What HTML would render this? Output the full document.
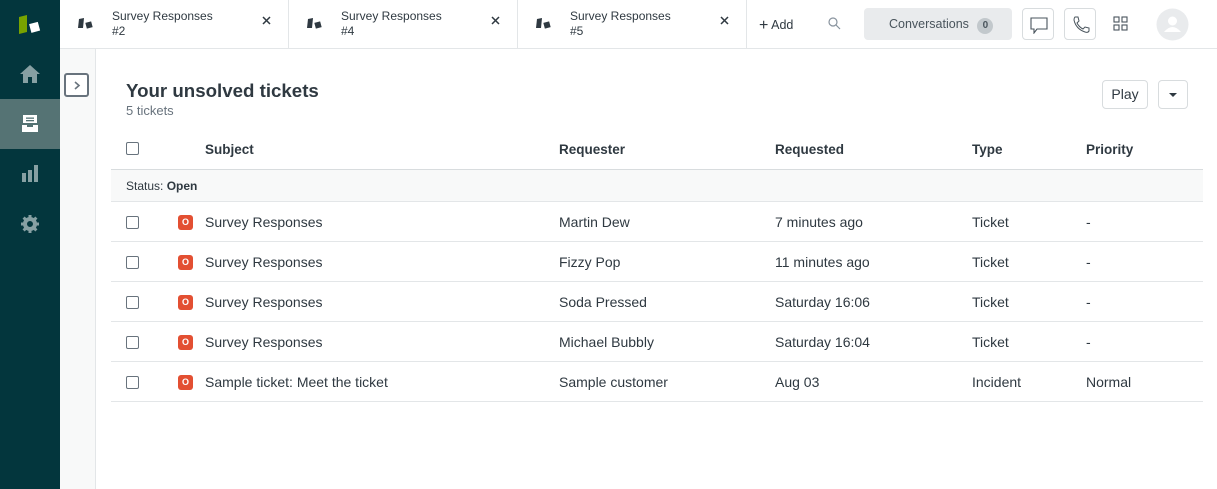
<!DOCTYPE html>
<html><head><style>
*{box-sizing:border-box;margin:0;padding:0}
body{width:1217px;height:489px;overflow:hidden;font-family:"Liberation Sans",sans-serif;color:#2f3941;background:#fff;position:relative;font-size:14px}
.abs{position:absolute}
.side{left:0;top:0;width:60px;height:489px;background:#03363d}
.top{left:60px;top:0;right:0;height:49px;border-bottom:1px solid #e3e6e8;background:#fff}
.tab{top:0;height:48px;width:229px;border-right:1px solid #e3e6e8}
.tab .t{position:absolute;left:52px;top:9px;font-size:12px;line-height:15px;color:#2f3941}
.tab .x{position:absolute;right:17px;top:16px}
.panel{left:60px;top:49px;width:36px;height:440px;background:#f8f9f9;border-right:1px solid #e3e6e8}
.cb{position:absolute;width:13px;height:13px;border:1px solid #68737d;border-radius:2px;background:#fff}
.row{position:absolute;left:111px;width:1092px;height:40px;border-bottom:1px solid #e3e6e8}
.row span{position:absolute;top:12px;font-size:14px;color:#2f3941}
.hd span{font-size:13.5px;font-weight:bold}
.badge{position:absolute;left:67px;top:13px;width:15px;height:15px;background:#e34f32;border-radius:3px;color:#fff;font-size:9px;font-weight:bold;text-align:center;line-height:15px}
.btn{border:1px solid #d8dcde;border-radius:4px;background:#fff}
</style></head><body>
<div class="abs side">
 <svg class="abs" style="left:17px;top:12px" width="28" height="24"><polygon points="2,5 10,3 10,20 2,22" fill="#78a300"/><rect x="13" y="11" width="9" height="9" fill="#fff" transform="rotate(-15 17 15)"/></svg>
 <svg class="abs" style="left:19px;top:64px" width="22" height="20"><path d="M11 1 L1 10 H4 V19 H9 V13 H13 V19 H18 V10 H21 Z" fill="#87a0a3"/></svg>
 <div class="abs" style="left:0;top:99px;width:60px;height:50px;background:#557374"></div>
 <svg class="abs" style="left:21px;top:114px" width="18" height="19"><rect x="2" y="1" width="14" height="8" fill="#fff"/><rect x="5" y="3.5" width="8" height="1.3" fill="#557374"/><rect x="5" y="6" width="8" height="1.3" fill="#557374"/><path d="M1 11 H6 V13 H12 V11 H17 V18 H1 Z" fill="#fff"/></svg>
 <svg class="abs" style="left:22px;top:165px" width="16" height="18"><rect x="0" y="8" width="4" height="9" fill="#87a0a3"/><rect x="6" y="5" width="4" height="12" fill="#87a0a3"/><rect x="12" y="0" width="4" height="17" fill="#87a0a3"/></svg>
 <svg class="abs" style="left:20px;top:214px" width="20" height="20" viewBox="0 0 20 20"><circle cx="10" cy="10" r="5" fill="none" stroke="#87a0a3" stroke-width="4"/><g stroke="#87a0a3" stroke-width="3"><path d="M10 1v4M10 15v4M1 10h4M15 10h4M3.6 3.6l2.8 2.8M13.6 13.6l2.8 2.8M3.6 16.4l2.8-2.8M13.6 6.4l2.8-2.8"/></g></svg>
</div>
<div class="abs top">
 <div class="abs tab" style="left:0"><svg class="abs" style="left:18px;top:17px" width="16" height="12"><polygon points="1,2 6,1 5,11 0,11" fill="#2f3941"/><rect x="8" y="5" width="6" height="6" fill="#2f3941" transform="rotate(-15 11 8)"/></svg><div class="t">Survey Responses<br>#2</div><svg class="x" width="9" height="9"><path d="M1 1L8 8M8 1L1 8" stroke="#2f3941" stroke-width="1.5"/></svg></div>
 <div class="abs tab" style="left:229px"><svg class="abs" style="left:18px;top:17px" width="16" height="12"><polygon points="1,2 6,1 5,11 0,11" fill="#2f3941"/><rect x="8" y="5" width="6" height="6" fill="#2f3941" transform="rotate(-15 11 8)"/></svg><div class="t">Survey Responses<br>#4</div><svg class="x" width="9" height="9"><path d="M1 1L8 8M8 1L1 8" stroke="#2f3941" stroke-width="1.5"/></svg></div>
 <div class="abs tab" style="left:458px"><svg class="abs" style="left:18px;top:17px" width="16" height="12"><polygon points="1,2 6,1 5,11 0,11" fill="#2f3941"/><rect x="8" y="5" width="6" height="6" fill="#2f3941" transform="rotate(-15 11 8)"/></svg><div class="t">Survey Responses<br>#5</div><svg class="x" width="9" height="9"><path d="M1 1L8 8M8 1L1 8" stroke="#2f3941" stroke-width="1.5"/></svg></div>
 <div class="abs" style="left:699px;top:16px;font-size:12.5px;color:#2f3941"><span style="font-size:16px;position:relative;top:1px">+</span> Add</div>
 <svg class="abs" style="left:768px;top:17px" width="13" height="13"><circle cx="5" cy="5" r="4" fill="none" stroke="#87929d" stroke-width="1.2"/><path d="M8 8 L12 12" stroke="#87929d" stroke-width="1.2"/></svg>
 <div class="abs" style="left:804px;top:8px;width:148px;height:32px;background:#e9ebed;border-radius:4px;font-size:12.5px;color:#49545c;line-height:32px;padding-left:25px">Conversations <span style="display:inline-block;width:16px;height:16px;border-radius:8px;background:#c2c8cc;font-size:10px;line-height:16px;text-align:center;margin-left:5px;font-weight:bold">0</span></div>
 <div class="abs btn" style="left:962px;top:8px;width:32px;height:32px"><svg class="abs" style="left:7px;top:8px" width="18" height="17"><path d="M1 1 H17 V12 H7 L4 16 V12 H1 Z" fill="none" stroke="#49545c" stroke-width="1.1"/></svg></div>
 <div class="abs btn" style="left:1004px;top:8px;width:32px;height:32px"><svg class="abs" style="left:7px;top:7px" width="18" height="18"><path d="M3 1 L6 1 L7 5 L5 7 Q7 11 11 13 L13 11 L17 12 L17 15 Q16 17 13 16 Q4 13 2 4 Q2 2 3 1 Z" fill="none" stroke="#49545c" stroke-width="1"/></svg></div>
 <svg class="abs" style="left:1053px;top:16px" width="15" height="15"><g fill="none" stroke="#49545c" stroke-width="1.1"><rect x="1" y="1" width="5" height="5"/><rect x="9" y="1" width="5" height="5"/><rect x="1" y="9" width="5" height="5"/><rect x="9" y="9" width="5" height="5"/></g></svg>
 <svg class="abs" style="left:1096px;top:8px" width="33" height="33"><circle cx="16.5" cy="16.5" r="16" fill="#e9ebed"/><circle cx="16.5" cy="13" r="4.5" fill="#fff"/><path d="M8 24 Q16.5 14 25 24 Z" fill="#fff"/></svg>
</div>
<div class="abs panel"><div class="abs btn" style="left:4px;top:24px;width:25px;height:24px;border:2px solid #68737d;border-radius:3px"><svg class="abs" style="left:7px;top:5px" width="8" height="11"><path d="M2 2 L6 5.5 L2 9" fill="none" stroke="#68737d" stroke-width="1.6"/></svg></div></div>
<div class="abs" style="left:126px;top:80px;font-size:18.7px;font-weight:bold;color:#2f3941">Your unsolved tickets</div>
<div class="abs" style="left:126px;top:103px;font-size:13px;color:#68737d">5 tickets</div>
<div class="abs btn" style="left:1102px;top:80px;width:46px;height:29px;font-size:14px;text-align:center;line-height:27px">Play</div>
<div class="abs btn" style="left:1158px;top:80px;width:30px;height:29px"><div class="abs" style="left:10px;top:12px;width:0;height:0;border-left:4px solid transparent;border-right:4px solid transparent;border-top:4px solid #2f3941"></div></div>
<div class="row hd" style="top:130px;height:40px;border-bottom:1px solid #d8dcde">
 <div class="cb" style="left:15px;top:12px"></div>
 <span style="left:94px;top:12px">Subject</span><span style="left:448px">Requester</span><span style="left:664px">Requested</span><span style="left:861px">Type</span><span style="left:975px">Priority</span>
</div>
<div class="row" style="top:170px;height:32px;background:#f8f9f9"><span style="left:15px;top:9px;font-size:12px">Status: <b>Open</b></span></div>
<div class="row" style="top:202px"><div class="cb" style="left:15px;top:14px"></div><div class="badge">O</div><span style="left:94px">Survey Responses</span><span style="left:448px">Martin Dew</span><span style="left:664px">7 minutes ago</span><span style="left:861px">Ticket</span><span style="left:975px">-</span></div>
<div class="row" style="top:242px"><div class="cb" style="left:15px;top:14px"></div><div class="badge">O</div><span style="left:94px">Survey Responses</span><span style="left:448px">Fizzy Pop</span><span style="left:664px">11 minutes ago</span><span style="left:861px">Ticket</span><span style="left:975px">-</span></div>
<div class="row" style="top:282px"><div class="cb" style="left:15px;top:14px"></div><div class="badge">O</div><span style="left:94px">Survey Responses</span><span style="left:448px">Soda Pressed</span><span style="left:664px">Saturday 16:06</span><span style="left:861px">Ticket</span><span style="left:975px">-</span></div>
<div class="row" style="top:322px"><div class="cb" style="left:15px;top:14px"></div><div class="badge">O</div><span style="left:94px">Survey Responses</span><span style="left:448px">Michael Bubbly</span><span style="left:664px">Saturday 16:04</span><span style="left:861px">Ticket</span><span style="left:975px">-</span></div>
<div class="row" style="top:362px"><div class="cb" style="left:15px;top:14px"></div><div class="badge">O</div><span style="left:94px">Sample ticket: Meet the ticket</span><span style="left:448px">Sample customer</span><span style="left:664px">Aug 03</span><span style="left:861px">Incident</span><span style="left:975px">Normal</span></div>
</body></html>
